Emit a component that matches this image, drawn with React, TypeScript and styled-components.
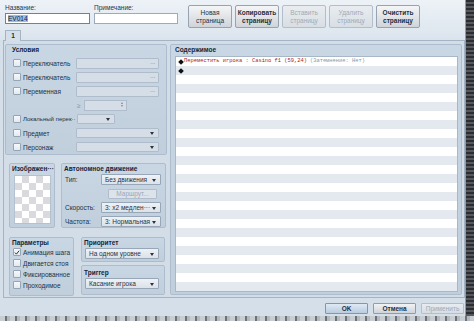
import React from 'react';
import styled, { createGlobalStyle, css } from 'styled-components';

const GlobalStyle = createGlobalStyle`
  html, body { margin: 0; padding: 0; }
  body {
    width: 474px;
    height: 321px;
    overflow: hidden;
    background: #3c3f44;
    font-family: "Liberation Sans", Arial, sans-serif;
    font-size: 6.5px;
    color: #1d2b39;
  }
  * { box-sizing: border-box; }
`;

const Screen = styled.div`
  display: grid;
  grid-template-columns: 466px 8px;
  grid-template-rows: 316px 5px;
  width: 474px;
  height: 321px;
`;

const SideStrip = styled.div`
  background: repeating-linear-gradient(180deg, #2b2d31 0 2px, #55585e 2px 4px);
`;

const BottomStrip = styled.div`
  grid-column: 1 / 3;
  background: repeating-linear-gradient(90deg, #c9ced3 0 5px, #6d7278 5px 7px, #b4b9bf 7px 10px);
`;

const Window = styled.div`
  display: flex;
  flex-direction: column;
  width: 466px;
  height: 316px;
  background: #d5dfe9;
  border-right: 1px solid #8e9cab;
`;

const Header = styled.div`
  flex: none;
  background: linear-gradient(#edf2f7, #dbe4ed);
`;

const TopBar = styled.div`
  height: 29px;
  display: flex;
  align-items: flex-start;
  padding: 4px 0 0 5px;
`;

const Field = styled.div<{ $w: number; $ml?: number }>`
  width: ${p => p.$w}px;
  margin-left: ${p => p.$ml ?? 0}px;
  display: flex;
  flex-direction: column;
`;

const FieldLabel = styled.div`
  height: 9px;
  line-height: 8px;
  color: #26364a;
`;

const TextInput = styled.div<{ $focus?: boolean }>`
  height: 11px;
  background: #fff;
  border: 1px solid ${p => (p.$focus ? '#5d86b8' : '#9daabb')};
  padding: 1px 2px;
  line-height: 7px;
`;

const Selected = styled.span`
  background: #9fbde3;
  color: #0f2442;
`;

const Buttons = styled.div`
  display: flex;
  gap: 3px;
  margin: 1px 0 0 10px;
`;

const PageButton = styled.div<{ $disabled?: boolean; $bold?: boolean }>`
  width: 44px;
  height: 23px;
  display: flex;
  align-items: center;
  justify-content: center;
  text-align: center;
  line-height: 8px;
  border: 1px solid #97a3b0;
  border-radius: 2px;
  background: linear-gradient(#f4f5f6, #d0d4d9);
  color: #23313f;
  font-weight: ${p => (p.$bold ? 'bold' : 'normal')};
  ${p =>
    p.$disabled &&
    css`
      background: linear-gradient(#e9edf1, #d8dee4);
      border-color: #b3bec9;
      color: #9eabb8;
      font-weight: normal;
    `}
`;

const TabStrip = styled.div`
  height: 11px;
  padding-left: 5px;
  display: flex;
  align-items: flex-end;
`;

const Tab = styled.div`
  width: 16px;
  height: 11px;
  border: 1px solid #a4b4c5;
  border-bottom: none;
  background: #d5dfe9;
  font-weight: bold;
  text-align: center;
  line-height: 10px;
  margin-bottom: -1px;
  position: relative;
`;

const TabPanel = styled.div`
  width: 462px;
  height: 258px;
  margin-left: 3px;
  border: 1px solid #a4b4c5;
  background: #d3dde8;
  display: flex;
  gap: 2px;
  padding: 3px 0 0 1px;
`;

const LeftColumn = styled.div`
  width: 163px;
  display: flex;
  flex-direction: column;
`;

const Group = styled.div<{ $w: number; $h: number }>`
  width: ${p => p.$w}px;
  height: ${p => p.$h}px;
  flex: none;
  background: linear-gradient(#c9d6e3, #c1cfdd);
  border: 1px solid #aebdcd;
  border-radius: 2px;
  display: flex;
  flex-direction: column;
`;

const GroupTitle = styled.div<{ $pl?: number; $mt?: number }>`
  font-weight: bold;
  color: #14263a;
  height: 10px;
  line-height: 10px;
  margin-top: ${p => p.$mt ?? 0}px;
  padding-left: ${p => p.$pl ?? 2}px;
  white-space: nowrap;
  overflow: hidden;
`;

const CondRows = styled.div`
  display: flex;
  flex-direction: column;
  gap: 4px;
  padding: 3px 0 0 7px;
`;

const CondRow = styled.div`
  height: 10px;
  display: flex;
  align-items: center;
`;

const CheckLabel = styled.div<{ $w?: number; $small?: boolean }>`
  display: flex;
  align-items: center;
  gap: 2px;
  width: ${p => (p.$w ? `${p.$w}px` : 'auto')};
  white-space: nowrap;
  color: #22323f;
  font-size: ${p => (p.$small ? '6px' : 'inherit')};
`;

const Box = styled.div`
  width: 8px;
  height: 8px;
  flex: none;
  background: linear-gradient(#f7f9fb, #e3e9ef);
  border: 1px solid #95a5b6;
  border-radius: 1px;
  display: flex;
  align-items: center;
  justify-content: center;
`;

const Select = styled.div<{ $w: number; $h?: number; $disabled?: boolean }>`
  position: relative;
  width: ${p => p.$w}px;
  height: ${p => p.$h ?? 11}px;
  flex: none;
  border: 1px solid ${p => (p.$disabled ? '#afbccb' : '#98a7b7')};
  border-radius: 1px;
  background: ${p => (p.$disabled ? '#d5dde6' : 'linear-gradient(#eef2f5, #dbe2e9)')};
  padding: 0 10px 0 3px;
  line-height: ${p => (p.$h ?? 11) - 2}px;
  white-space: nowrap;
  overflow: hidden;
  color: #25354a;
`;

const Arrow = styled.div`
  position: absolute;
  right: 4px;
  top: 50%;
  margin-top: -1px;
  border-left: 2px solid transparent;
  border-right: 2px solid transparent;
  border-top: 3px solid #2b3440;
`;

const Dots = styled.div`
  position: absolute;
  right: 3px;
  top: 0;
  color: #8a98a7;
  letter-spacing: -0.5px;
`;

const SpinRow = styled.div`
  height: 10px;
  display: flex;
  align-items: center;
  padding-left: 64px;
  gap: 3px;
  color: #8b9aaa;
`;

const Spin = styled.div`
  position: relative;
  width: 43px;
  height: 11px;
  border: 1px solid #afbccb;
  background: #d5dde6;
`;

const SpinArrows = styled.div`
  position: absolute;
  right: 3px;
  top: 1px;
  display: flex;
  flex-direction: column;
  gap: 1px;
  &::before,
  &::after {
    content: '';
    border-left: 1.5px solid transparent;
    border-right: 1.5px solid transparent;
  }
  &::before { border-bottom: 2px solid #7c8896; }
  &::after { border-top: 2px solid #7c8896; }
`;

const LowerRow = styled.div<{ $mt: number; $gap: number }>`
  display: flex;
  gap: ${p => p.$gap}px;
  margin: ${p => p.$mt}px 0 0 4px;
`;

const Checker = styled.div`
  width: 37px;
  height: 49px;
  margin: 1px 0 0 4px;
  border: 1px solid #b4c1ce;
  background: repeating-conic-gradient(#d8dadd 0 25%, #ffffff 0 50%) 0 0 / 14px 14px;
`;

const FormGrid = styled.div`
  display: grid;
  grid-template-columns: 36px 60px;
  grid-auto-rows: 11px;
  row-gap: 3px;
  padding: 0 0 0 3px;
  align-items: center;
`;

const FormLabel = styled.div`
  color: #22323f;
`;

const RouteButton = styled.div`
  grid-column: 2;
  width: 49px;
  height: 10px;
  margin-left: 7px;
  border: 1px solid #b0bdca;
  border-radius: 1px;
  background: #dce3ea;
  color: #9aa8b6;
  text-align: center;
  line-height: 8px;
`;

const StackColumn = styled.div`
  display: flex;
  flex-direction: column;
  gap: 3px;
`;

const ParamList = styled.div`
  display: flex;
  flex-direction: column;
  gap: 3px;
  padding: 0 0 0 3px;
`;

const GroupBody = styled.div`
  padding: 0 0 0 3px;
`;

const ContentGroup = styled(Group)`
  padding: 0 3px 2px 4px;
`;

const List = styled.div`
  flex: 1;
  margin-top: 1px;
  background: #fff;
  border: 1px solid #a9b8c8;
  overflow: hidden;
`;

const ListRow = styled.div<{ $alt: boolean }>`
  height: 9px;
  line-height: 9px;
  padding-left: 2px;
  background: ${p => (p.$alt ? '#e4e9ef' : '#ffffff')};
  font-family: "Liberation Mono", "DejaVu Sans Mono", monospace;
  font-size: 5.4px;
  white-space: nowrap;
  display: flex;
  align-items: center;
`;

const Diamond = styled.span`
  display: inline-block;
  width: 4px;
  height: 4px;
  background: #111;
  transform: rotate(45deg);
  margin: 0 1px 0 1px;
`;

const Cmd = styled.span`
  color: #a42626;
`;

const Note = styled.span`
  color: #8b97a4;
  margin-left: 3px;
`;

const BottomBar = styled.div`
  height: 18px;
  display: flex;
  justify-content: flex-end;
  align-items: flex-start;
  gap: 5px;
  padding: 5px 1px 0 0;
`;

const DialogButton = styled.div<{ $variant?: 'default' | 'disabled' }>`
  width: 43px;
  height: 11px;
  border: 1px solid #8e9cab;
  border-radius: 1px;
  text-align: center;
  line-height: 9px;
  font-weight: bold;
  background: linear-gradient(#f1f2f4, #cfd4da);
  color: #22303e;
  ${p =>
    p.$variant === 'default' &&
    css`
      background: linear-gradient(#dfe9f4, #b9cce0);
      border-color: #7e97b2;
    `}
  ${p =>
    p.$variant === 'disabled' &&
    css`
      background: linear-gradient(#e7ecf1, #d6dde4);
      border-color: #b2bfcc;
      color: #9eabb8;
      font-weight: normal;
    `}
`;

const CheckMark = () => (
  <svg width="7" height="7" viewBox="0 0 7 7">
    <path d="M1 3.6 L2.8 5.4 L6 1.4" fill="none" stroke="#1d2b39" strokeWidth="1.1" />
  </svg>
);

const conditions = ['Переключатель', 'Переключатель', 'Переменная'];

const App: React.FC = () => {
  const rows = Array.from({ length: 27 });

  return (
    <>
      <GlobalStyle />
      <Screen>
        <Window>
          <Header>
            <TopBar>
              <Field $w={85}>
                <FieldLabel>Название:</FieldLabel>
                <TextInput $focus>
                  <Selected>EV014</Selected>
                </TextInput>
              </Field>
              <Field $w={84} $ml={4}>
                <FieldLabel>Примечание:</FieldLabel>
                <TextInput />
              </Field>
              <Buttons>
                <PageButton>Новая<br />страница</PageButton>
                <PageButton $bold>Копировать<br />страницу</PageButton>
                <PageButton $disabled>Вставить<br />страницу</PageButton>
                <PageButton $disabled>Удалить<br />страницу</PageButton>
                <PageButton $bold>Очистить<br />страницу</PageButton>
              </Buttons>
            </TopBar>
            <TabStrip>
              <Tab>1</Tab>
            </TabStrip>
          </Header>

          <TabPanel>
            <LeftColumn>
              <Group $w={162} $h={111}>
                <GroupTitle $pl={6}>Условия</GroupTitle>
                <CondRows>
                  {conditions.map((label, i) => (
                    <CondRow key={i}>
                      <CheckLabel $w={63}>
                        <Box />
                        {label}
                      </CheckLabel>
                      <Select $w={83} $h={11} $disabled>
                        <Dots>···</Dots>
                      </Select>
                    </CondRow>
                  ))}
                  <SpinRow>
                    ≥
                    <Spin>
                      <SpinArrows />
                    </Spin>
                  </SpinRow>
                  <CondRow>
                    <CheckLabel $w={64} $small>
                      <Box />
                      Локальный перек··
                    </CheckLabel>
                    <Select $w={38} $h={10} $disabled>
                      <Arrow />
                    </Select>
                  </CondRow>
                  <CondRow>
                    <CheckLabel $w={63}>
                      <Box />
                      Предмет
                    </CheckLabel>
                    <Select $w={83} $h={10} $disabled>
                      <Arrow />
                    </Select>
                  </CondRow>
                  <CondRow>
                    <CheckLabel $w={63}>
                      <Box />
                      Персонаж
                    </CheckLabel>
                    <Select $w={83} $h={10} $disabled>
                      <Arrow />
                    </Select>
                  </CondRow>
                </CondRows>
              </Group>

              <LowerRow $mt={8} $gap={6}>
                <Group $w={46} $h={65}>
                  <GroupTitle>Изображен···</GroupTitle>
                  <Checker />
                </Group>
                <Group $w={105} $h={65}>
                  <GroupTitle>Автономное движение</GroupTitle>
                  <FormGrid>
                    <FormLabel>Тип:</FormLabel>
                    <Select $w={60}>
                      Без движения
                      <Arrow />
                    </Select>
                    <RouteButton>Маршрут...</RouteButton>
                    <FormLabel>Скорость:</FormLabel>
                    <Select $w={60}>
                      3: x2 медлен···
                      <Arrow />
                    </Select>
                    <FormLabel>Частота:</FormLabel>
                    <Select $w={60}>
                      3: Нормальная
                      <Arrow />
                    </Select>
                  </FormGrid>
                </Group>
              </LowerRow>

              <LowerRow $mt={9} $gap={7}>
                <Group $w={65} $h={59}>
                  <GroupTitle>Параметры</GroupTitle>
                  <ParamList>
                    <CheckLabel>
                      <Box>
                        <CheckMark />
                      </Box>
                      Анимация шага
                    </CheckLabel>
                    <CheckLabel>
                      <Box />
                      Двигается стоя
                    </CheckLabel>
                    <CheckLabel>
                      <Box />
                      Фиксированное
                    </CheckLabel>
                    <CheckLabel>
                      <Box />
                      Проходимое
                    </CheckLabel>
                  </ParamList>
                </Group>
                <StackColumn>
                  <Group $w={84} $h={25}>
                    <GroupTitle>Приоритет</GroupTitle>
                    <GroupBody>
                      <Select $w={74}>
                        На одном уровне
                        <Arrow />
                      </Select>
                    </GroupBody>
                  </Group>
                  <Group $w={84} $h={30}>
                    <GroupTitle $mt={2}>Триггер</GroupTitle>
                    <GroupBody>
                      <Select $w={74}>
                        Касание игрока
                        <Arrow />
                      </Select>
                    </GroupBody>
                  </Group>
                </StackColumn>
              </LowerRow>
            </LeftColumn>

            <ContentGroup $w={292} $h={251}>
              <GroupTitle $pl={0}>Содержимое</GroupTitle>
              <List>
                {rows.map((_, i) => (
                  <ListRow key={i} $alt={i % 2 === 1}>
                    {i === 0 && (
                      <>
                        <Diamond />
                        <Cmd>Переместить игрока : Casino f1 (59,24)</Cmd>
                        <Note>(Затемнение: Нет)</Note>
                      </>
                    )}
                    {i === 1 && <Diamond />}
                  </ListRow>
                ))}
              </List>
            </ContentGroup>
          </TabPanel>

          <BottomBar>
            <DialogButton $variant="default">OK</DialogButton>
            <DialogButton>Отмена</DialogButton>
            <DialogButton $variant="disabled">Применить</DialogButton>
          </BottomBar>
        </Window>
        <SideStrip />
        <BottomStrip />
      </Screen>
    </>
  );
};

export default App;
